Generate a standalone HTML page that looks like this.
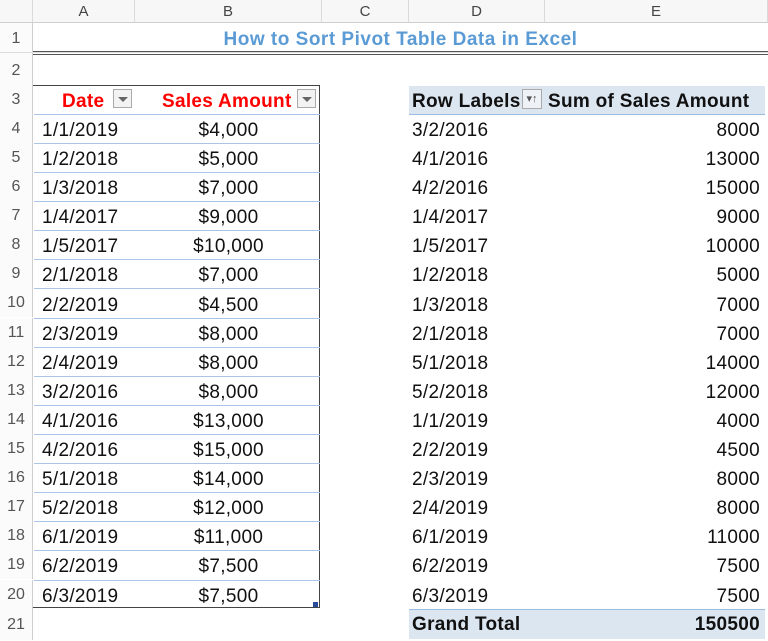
<!DOCTYPE html>
<html><head><meta charset="utf-8"><style>
body{margin:0;width:768px;height:640px;overflow:hidden;background:#fff;font-family:"Liberation Sans",sans-serif;position:relative}
.a{position:absolute}
.hdr{top:0;height:23px;background:#f7f7f7;border-bottom:1px solid #cfcfcf;color:#444;font-size:15px;text-align:center;line-height:23px;border-right:1px solid #dadada;box-sizing:border-box}
.rn{left:0;width:33px;color:#555;font-size:16px;text-align:center;border-right:1px solid #cfcfcf;box-sizing:border-box;background:#fbfbfb}
.t{font-size:19px;color:#111;letter-spacing:0.3px;white-space:nowrap}
.r{text-align:right}
.c{text-align:center}
.sep{left:34px;width:286px;height:1px;background:#a9c4e4}
</style></head><body>
<div class="a hdr" style="left:0;width:33px"></div>
<div class="a hdr" style="left:33px;width:102px">A</div>
<div class="a hdr" style="left:135px;width:187px">B</div>
<div class="a hdr" style="left:322px;width:87px">C</div>
<div class="a hdr" style="left:409px;width:136px">D</div>
<div class="a hdr" style="left:545px;width:223px">E</div>

<div class="a rn" style="top:23px;height:30px;line-height:32px">1</div>
<div class="a rn" style="top:53px;height:32px;line-height:36px">2</div>
<div class="a rn" style="top:85px;height:29px;line-height:30px">3</div>
<div class="a rn" style="top:114px;height:29px;line-height:30px">4</div>
<div class="a rn" style="top:143px;height:29px;line-height:30px">5</div>
<div class="a rn" style="top:172px;height:29px;line-height:30px">6</div>
<div class="a rn" style="top:201px;height:29px;line-height:30px">7</div>
<div class="a rn" style="top:230px;height:29px;line-height:30px">8</div>
<div class="a rn" style="top:259px;height:29px;line-height:30px">9</div>
<div class="a rn" style="top:288px;height:29px;line-height:30px">10</div>
<div class="a rn" style="top:318px;height:29px;line-height:30px">11</div>
<div class="a rn" style="top:347px;height:29px;line-height:30px">12</div>
<div class="a rn" style="top:376px;height:29px;line-height:30px">13</div>
<div class="a rn" style="top:405px;height:29px;line-height:30px">14</div>
<div class="a rn" style="top:434px;height:29px;line-height:30px">15</div>
<div class="a rn" style="top:463px;height:29px;line-height:30px">16</div>
<div class="a rn" style="top:492px;height:29px;line-height:30px">17</div>
<div class="a rn" style="top:521px;height:29px;line-height:30px">18</div>
<div class="a rn" style="top:550px;height:29px;line-height:30px">19</div>
<div class="a rn" style="top:580px;height:29px;line-height:30px">20</div>
<div class="a rn" style="top:609px;height:31px;line-height:32px">21</div>
<div class="a" style="left:0;top:52px;width:768px;height:1px;background:#ddd"></div>

<div class="a" style="left:33px;top:23px;width:735px;height:29px;text-align:center;line-height:33px;color:#5b9bd5;font-weight:bold;font-size:19px;letter-spacing:0.5px">How to Sort Pivot Table Data in Excel</div>
<div class="a" style="left:33px;top:51px;width:735px;height:1px;background:#555"></div>
<div class="a" style="left:33px;top:54px;width:735px;height:1px;background:#555"></div>

<div class="a" style="left:33px;top:85px;width:287px;height:523px;border:1.5px solid #444;border-left:none;box-sizing:border-box"></div>
<div class="a" style="left:313px;top:602px;width:5px;height:5px;background:#2a4d9b"></div>
<div class="a t" style="left:62px;top:91px;color:#f00;font-weight:bold">Date</div>
<div class="a" style="left:113px;top:89px;width:19px;height:19px;border:1px solid #aaa;background:#f3f3f3;box-sizing:border-box"><div style="margin:7px 0 0 4px;width:0;height:0;border-left:5px solid transparent;border-right:5px solid transparent;border-top:5px solid #666"></div></div>
<div class="a t" style="left:162px;top:91px;color:#f00;font-weight:bold">Sales Amount</div>
<div class="a" style="left:297px;top:89px;width:19px;height:19px;border:1px solid #aaa;background:#f3f3f3;box-sizing:border-box"><div style="margin:7px 0 0 4px;width:0;height:0;border-left:5px solid transparent;border-right:5px solid transparent;border-top:5px solid #666"></div></div>

<div class="a sep" style="top:114px"></div><div class="a sep" style="top:143px"></div><div class="a sep" style="top:172px"></div><div class="a sep" style="top:201px"></div><div class="a sep" style="top:230px"></div><div class="a sep" style="top:259px"></div><div class="a sep" style="top:288px"></div><div class="a sep" style="top:318px"></div><div class="a sep" style="top:347px"></div><div class="a sep" style="top:376px"></div><div class="a sep" style="top:405px"></div><div class="a sep" style="top:434px"></div><div class="a sep" style="top:463px"></div><div class="a sep" style="top:492px"></div><div class="a sep" style="top:521px"></div><div class="a sep" style="top:550px"></div><div class="a sep" style="top:580px"></div>

<div class="a t" style="left:42px;top:116px;line-height:29.1px">1/1/2019<br>1/2/2018<br>1/3/2018<br>1/4/2017<br>1/5/2017<br>2/1/2018<br>2/2/2019<br>2/3/2019<br>2/4/2019<br>3/2/2016<br>4/1/2016<br>4/2/2016<br>5/1/2018<br>5/2/2018<br>6/1/2019<br>6/2/2019<br>6/3/2019</div>
<div class="a t c" style="left:135px;width:187px;top:116px;line-height:29.1px">$4,000<br>$5,000<br>$7,000<br>$9,000<br>$10,000<br>$7,000<br>$4,500<br>$8,000<br>$8,000<br>$8,000<br>$13,000<br>$15,000<br>$14,000<br>$12,000<br>$11,000<br>$7,500<br>$7,500</div>

<div class="a" style="left:409px;top:86px;width:356px;height:28px;background:#dce6f1;border-bottom:1px solid #9bbbe0"></div>
<div class="a t" style="left:412px;top:91px;font-weight:bold">Row Labels</div>
<div class="a" style="left:522px;top:89px;width:20px;height:20px;border:1px solid #aaa;background:#eef2f7;box-sizing:border-box;font-size:11px;color:#555;text-align:center;line-height:18px">▾↑</div>
<div class="a t" style="left:548px;top:91px;font-weight:bold">Sum of Sales Amount</div>
<div class="a t" style="left:412px;top:116px;line-height:29.1px">3/2/2016<br>4/1/2016<br>4/2/2016<br>1/4/2017<br>1/5/2017<br>1/2/2018<br>1/3/2018<br>2/1/2018<br>5/1/2018<br>5/2/2018<br>1/1/2019<br>2/2/2019<br>2/3/2019<br>2/4/2019<br>6/1/2019<br>6/2/2019<br>6/3/2019</div>
<div class="a t r" style="left:545px;width:215px;top:116px;line-height:29.1px">8000<br>13000<br>15000<br>9000<br>10000<br>5000<br>7000<br>7000<br>14000<br>12000<br>4000<br>4500<br>8000<br>8000<br>11000<br>7500<br>7500</div>
<div class="a" style="left:409px;top:609px;width:356px;height:29px;background:#dce6f1;border-top:1px solid #9bbbe0"></div>
<div class="a t" style="left:412px;top:614px;font-weight:bold">Grand Total</div>
<div class="a t r" style="left:545px;width:215px;top:614px;font-weight:bold">150500</div>
</body></html>
